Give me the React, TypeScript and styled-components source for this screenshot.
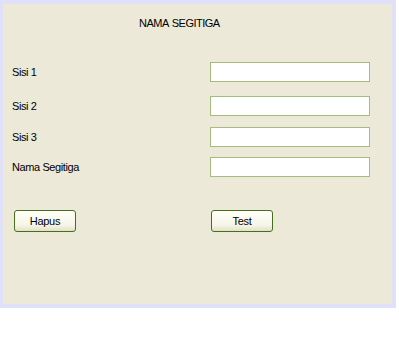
import styled, { createGlobalStyle } from "styled-components"

const GlobalStyle = createGlobalStyle`
  body{
    margin:0;
    background:#fff;
    font-family:"Liberation Sans", Arial, sans-serif;
  }
`

const fields = [
  { label: "Sisi 1", top: 0 },
  { label: "Sisi 2", top: 14 },
  { label: "Sisi 3", top: 11 },
  { label: "Nama Segitiga", top: 10 },
]

const App = () => {
  return (
    <>
      <GlobalStyle />
      <Frame>
        <Panel>
          <Title>NAMA SEGITIGA</Title>
          <Form>
            {fields.map((f) => (
              <Row key={f.label} $top={f.top}>
                <Label>{f.label}</Label>
                <Field type="text" />
              </Row>
            ))}
          </Form>
          <Actions>
            <Button>Hapus</Button>
            <Button>Test</Button>
          </Actions>
        </Panel>
      </Frame>
    </>
  )
}

export default App

const Frame = styled.div`
  width:396px;
  height:308px;
  box-sizing:border-box;
  padding:4px 4px 4px 3px;
  background:#e0e0f9;
`

const Panel = styled.div`
  height:100%;
  background:#ece9d8;
  color:#000;
  font-size:11px;
  letter-spacing:-0.4px;
`

const Title = styled.div`
  padding:12px 0 0 136px;
  height:14px;
  line-height:14px;
  letter-spacing:-0.5px;
  word-spacing:1px;
`

const Form = styled.div`
  display:flex;
  flex-direction:column;
  margin-top:32px;
`

const Row = styled.div<{ $top: number }>`
  display:flex;
  align-items:center;
  justify-content:space-between;
  height:20px;
  margin-top:${(p) => p.$top}px;
  padding:0 22px 0 9px;
`

const Label = styled.span`
  line-height:14px;
`

const Field = styled.input`
  width:160px;
  height:20px;
  box-sizing:border-box;
  border:1px solid #a5bc80;
  background:#fff;
  padding:0 3px;
  margin:0;
  outline:none;
`

const Actions = styled.div`
  display:flex;
  gap:135px;
  margin-top:33px;
  padding-left:11px;
`

const Button = styled.button`
  width:62px;
  height:22px;
  box-sizing:border-box;
  border:1px solid #466f1a;
  border-radius:3px;
  background:linear-gradient(#fffffa, #f7f5e8 70%, #e3dfc8);
  font-family:"Liberation Sans", Arial, sans-serif;
  font-size:11px;
  letter-spacing:-0.3px;
  color:#000;
  padding:0;
`
